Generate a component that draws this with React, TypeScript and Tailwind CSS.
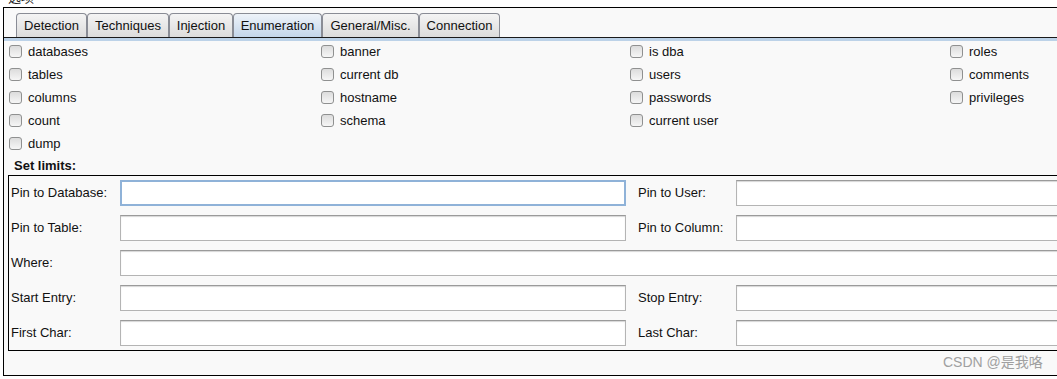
import React from 'react';

const tabs = [
  { label: 'Detection', w: 'w-[71px]' },
  { label: 'Techniques', w: 'w-[82px]' },
  { label: 'Injection', w: 'w-[64px]' },
  { label: 'Enumeration', w: 'w-[89px]', active: true },
  { label: 'General/Misc.', w: 'w-[97px]' },
  { label: 'Connection', w: 'w-[81px]' },
];

const checkColumns = [
  { w: 'w-[312px]', items: ['databases', 'tables', 'columns', 'count', 'dump'] },
  { w: 'w-[309px]', items: ['banner', 'current db', 'hostname', 'schema'] },
  { w: 'w-[320px]', items: ['is dba', 'users', 'passwords', 'current user'] },
  { w: 'w-[200px]', items: ['roles', 'comments', 'privileges'] },
];

const Check: React.FC<{ label: string }> = ({ label }) => (
  <div className="flex h-[23px] items-center">
    <span className="h-[13px] w-[13px] rounded-[3px] border border-[#8f9090] bg-gradient-to-b from-[#dcdcdc] to-[#f6f6f6]" />
    <span className="ml-[6px] text-[13px] text-[#111]">{label}</span>
  </div>
);

const Field: React.FC<{ focused?: boolean; w: string }> = ({ focused, w }) => (
  <div
    className={
      focused
        ? `${w} h-[26px] shrink-0 border-2 border-[#8fb2d8] bg-white`
        : `${w} h-[26px] shrink-0 border border-[#b4b4b4] border-t-[#9a9a9a] bg-white shadow-[inset_0_1px_1px_#d6d6d6]`
    }
  />
);

const Pair: React.FC<{ left: string; right?: string; focused?: boolean; wide?: boolean }> = ({
  left,
  right,
  focused,
  wide,
}) => (
  <div className="flex items-center">
    <div className="w-[109px] shrink-0 text-[13px] text-[#111]">{left}</div>
    {wide ? (
      <Field w="w-[1122px]" />
    ) : (
      <>
        <Field w="w-[506px]" focused={focused} />
        <div className="ml-[12px] w-[98px] shrink-0 text-[13px] text-[#111]">{right}</div>
        <Field w="w-[506px]" />
      </>
    )}
  </div>
);

export default function App() {
  return (
    <div className="relative h-[379px] w-[1057px] overflow-hidden bg-white font-['Liberation_Sans',Arial,'Noto_Sans_CJK_SC',sans-serif]">
      {/* group title, cut off at the top */}
      <div className="h-[7px] overflow-hidden pl-[8px]">
        <div className="-mt-[10px] text-[13px] leading-[16px] text-[#222]">选项</div>
      </div>

      <div className="ml-[3px] h-[369px] w-[1300px] border border-black bg-[#f9f9f9]">
        {/* tab strip */}
        <div className="flex h-[29px] items-end pl-[12px]">
          {tabs.map((t) => (
            <div
              key={t.label}
              className={`${t.w} flex h-[24px] items-center justify-center rounded-t-[4px] border border-b-0 border-[#898c95] text-[13px] text-[#111] ${
                t.active
                  ? 'bg-gradient-to-b from-[#eef3f9] to-[#c4d6ea]'
                  : 'bg-gradient-to-b from-[#f4f4f4] to-[#dcdcdc]'
              }`}
            >
              {t.label}
            </div>
          ))}
        </div>
        <div className="h-[4px] border-t border-[#1a1a1a] bg-[#bcd2e8]" />

        {/* checkboxes */}
        <div className="-mt-[1px] flex pl-[5px]">
          {checkColumns.map((c, i) => (
            <div key={i} className={`${c.w} shrink-0`}>
              {c.items.map((it) => (
                <Check key={it} label={it} />
              ))}
            </div>
          ))}
        </div>

        <div className="flex h-[20px] items-center pl-[10px] pt-[2px] text-[13px] font-bold text-[#111]">Set limits:</div>

        {/* limits box */}
        <div className="ml-[4px] flex flex-col gap-[9px] border border-black pb-[4px] pl-[2px] pt-[4px]">
          <Pair left="Pin to Database:" right="Pin to User:" focused />
          <Pair left="Pin to Table:" right="Pin to Column:" />
          <Pair left="Where:" wide />
          <Pair left="Start Entry:" right="Stop Entry:" />
          <Pair left="First Char:" right="Last Char:" />
        </div>
      </div>

      <div className="absolute left-[943px] top-[352px] text-[14px] text-[#a0a0a0]">CSDN @是我咯</div>
    </div>
  );
}
